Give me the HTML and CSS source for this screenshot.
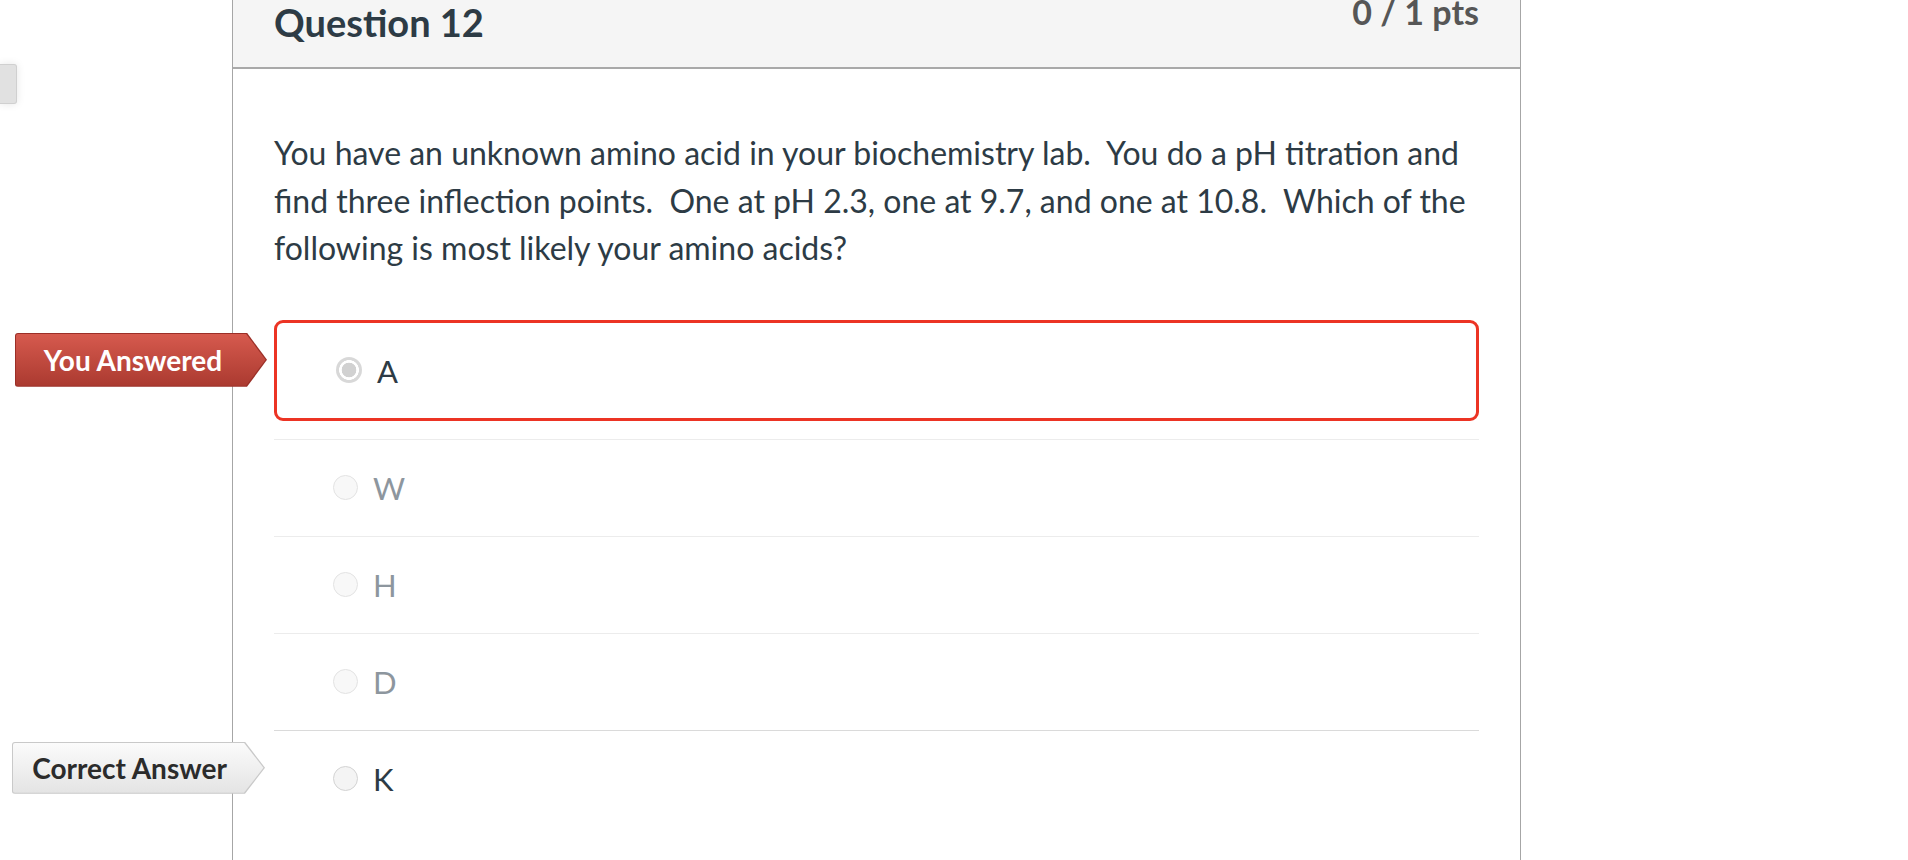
FILE: index.html
```html
<!DOCTYPE html>
<html lang="en">
<head>
<meta charset="utf-8">
<title>Question 12</title>
<link rel="stylesheet" href="styles.css">
</head>
<body>
<div class="page">
  <aside class="side">
    <div class="side-tab"></div>
  </aside>
  <main class="card">
    <header class="card-header">
      <h2 class="title">Question 12</h2>
      <div class="points">0 / 1 pts</div>
    </header>
    <section class="card-body">
      <p class="qtext">You have an unknown amino acid in your biochemistry lab.&nbsp; You do a pH titration and find three inflection points.&nbsp; One at pH 2.3, one at 9.7, and one at 10.8.&nbsp; Which of the following is most likely your amino acids?</p>
      <div class="answers">
        <div class="row row-first">
          <div class="badge badge-wrong"><span class="badge-text">You Answered</span></div>
          <div class="answer answer-wrong">
            <span class="radio radio-checked"></span>
            <span class="label">A</span>
          </div>
        </div>
        <div class="row">
          <div class="answer">
            <span class="radio"></span>
            <span class="label label-dim">W</span>
          </div>
        </div>
        <div class="row">
          <div class="answer">
            <span class="radio"></span>
            <span class="label label-dim">H</span>
          </div>
        </div>
        <div class="row row-strong">
          <div class="answer">
            <span class="radio"></span>
            <span class="label label-dim">D</span>
          </div>
        </div>
        <div class="row row-last">
          <div class="badge badge-correct"><span class="badge-text">Correct Answer</span></div>
          <div class="answer">
            <span class="radio radio-correct"></span>
            <span class="label">K</span>
          </div>
        </div>
      </div>
    </section>
  </main>
</div>
</body>
</html>
```

FILE: styles.css
```css
html, body {
  margin: 0;
  padding: 0;
  background: #ffffff;
}

body {
  font-family: "Lato", "Noto Sans", "Liberation Sans", sans-serif;
  color: #2d3b45;
  overflow: hidden;
}

.page {
  display: flex;
  height: 860px;
  overflow: hidden;
}

.side {
  flex: 0 0 232px;
}

.side-tab {
  margin-top: 64px;
  width: 16px;
  height: 38px;
  background: #e1e1e1;
  border: 1px solid #d0d0d0;
  border-left: none;
  border-radius: 0 3px 3px 0;
  box-shadow: 0 0 9px rgba(0, 0, 0, 0.10);
}

.card {
  flex: 0 0 1287px;
  border-left: 1px solid #a6a6a6;
  border-right: 1px solid #a6a6a6;
  height: 860px;
}

.card-header {
  height: 67px;
  background: #f5f5f5;
  border-bottom: 2px solid #a9a9a9;
  padding: 0 41px;
  display: flex;
  justify-content: space-between;
  align-items: flex-start;
  overflow: hidden;
}

.title {
  margin: 0;
  font-size: 38px;
  line-height: 44px;
  font-weight: 700;
  color: #2d3b45;
}

.points {
  margin-top: -8px;
  font-size: 34px;
  line-height: 40px;
  font-weight: 700;
  color: #565656;
}

.card-body {
  padding: 0 41px;
}

.qtext {
  margin: 60px 0 48px;
  font-size: 32px;
  line-height: 47.6px;
  color: #2d3b45;
}

.answers {
  display: flex;
  flex-direction: column;
}

.row {
  position: relative;
  border-bottom: 1px solid #ececec;
}

.row-first {
  padding-bottom: 18px;
}

.row-strong {
  border-bottom-color: #dadada;
}

.row-last {
  border-bottom: none;
}

.answer {
  height: 96px;
  display: flex;
  align-items: center;
  padding-left: 59px;
}

.answer-wrong {
  height: 95px;
  border: 3px solid #ec3424;
  border-radius: 9px;
}

.radio {
  flex: 0 0 auto;
  width: 23px;
  height: 23px;
  border-radius: 50%;
  border: 1.5px solid #e3e3e3;
  background: #f8f8f8;
}

.radio-checked {
  width: 26px;
  height: 26px;
  border: none;
  background: radial-gradient(circle, #d1d1d1 0 7px, #ffffff 7.6px 9.6px, #d8d8d8 10.2px 13px);
}

.radio-correct {
  border-color: #d3d3d3;
  background: #f4f4f4;
}

.label {
  margin-left: 15px;
  padding-top: 1px;
  font-size: 31px;
  color: #2d3b45;
}

.label-dim {
  color: #8d969e;
}

.badge {
  position: absolute;
  height: 54px;
  width: 252px;
  clip-path: polygon(0 0, calc(100% - 20px) 0, 100% 50%, calc(100% - 20px) 100%, 0 100%);
  border-radius: 3px;
  display: flex;
}

.badge::before {
  content: "";
  position: absolute;
  inset: 1px 1.5px 1px 1px;
  clip-path: polygon(0 0, calc(100% - 19.5px) 0, 100% 50%, calc(100% - 19.5px) 100%, 0 100%);
  border-radius: 2px;
}

.badge-text {
  position: relative;
  flex: 0 0 232px;
  display: flex;
  align-items: center;
  justify-content: center;
  font-size: 28px;
  font-weight: 700;
  padding-top: 1px;
}

.badge-wrong {
  left: -259px;
  top: 13px;
  background: #9b2f27;
}

.badge-wrong::before {
  background: linear-gradient(#d65a4e, #ab3a30);
}

.badge-wrong .badge-text {
  color: #ffffff;
  padding-left: 2px;
}

.badge-correct {
  left: -262px;
  top: 11px;
  height: 52px;
  width: 253px;
  background: #c9c9c9;
}

.badge-correct::before {
  background: linear-gradient(#fbfbfb, #e4e4e4);
}

.badge-correct .badge-text {
  color: #2b2b2b;
  flex-basis: 235px;
}
```
